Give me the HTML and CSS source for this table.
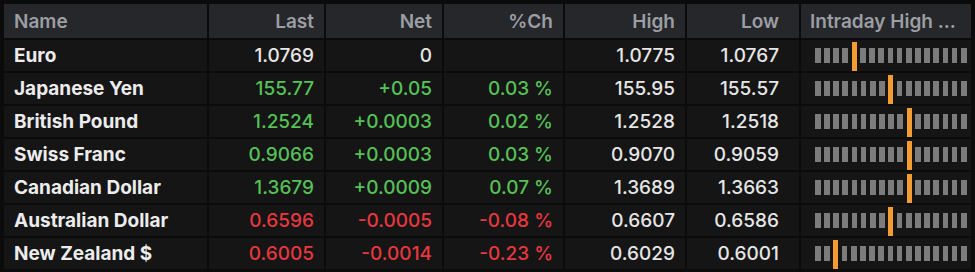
FILE: index.html
```html
<!DOCTYPE html>
<html>
<head>
<meta charset="utf-8">
<link rel="stylesheet" href="styles.css">
</head>
<body>
<div class="wrap">
<table class="fx">
<colgroup>
<col class="c-name"><col class="c-last"><col class="c-net"><col class="c-pct"><col class="c-high"><col class="c-low"><col class="c-bar">
</colgroup>
<thead>
<tr>
<th class="name">Name</th><th class="num">Last</th><th class="num">Net</th><th class="num">%Ch</th><th class="num">High</th><th class="num low">Low</th><th class="intra">Intraday High ...</th>
</tr>
</thead>
<tbody>
<tr>
<td class="name">Euro</td><td class="num">1.0769</td><td class="num">0</td><td class="num"></td><td class="num">1.0775</td><td class="num low">1.0767</td>
<td class="intra"><div class="bars"><i></i><i></i><i></i><i></i><b></b><i></i><i></i><i></i><i></i><i></i><i></i><i></i><i></i><i></i><i></i><i></i><i></i></div></td>
</tr>
<tr>
<td class="name">Japanese Yen</td><td class="num up">155.77</td><td class="num up">+0.05</td><td class="num up">0.03 %</td><td class="num">155.95</td><td class="num low">155.57</td>
<td class="intra"><div class="bars"><i></i><i></i><i></i><i></i><i></i><i></i><i></i><i></i><b></b><i></i><i></i><i></i><i></i><i></i><i></i><i></i><i></i></div></td>
</tr>
<tr>
<td class="name">British Pound</td><td class="num up">1.2524</td><td class="num up">+0.0003</td><td class="num up">0.02 %</td><td class="num">1.2528</td><td class="num low">1.2518</td>
<td class="intra"><div class="bars"><i></i><i></i><i></i><i></i><i></i><i></i><i></i><i></i><i></i><i></i><b></b><i></i><i></i><i></i><i></i><i></i><i></i></div></td>
</tr>
<tr>
<td class="name">Swiss Franc</td><td class="num up">0.9066</td><td class="num up">+0.0003</td><td class="num up">0.03 %</td><td class="num">0.9070</td><td class="num low">0.9059</td>
<td class="intra"><div class="bars"><i></i><i></i><i></i><i></i><i></i><i></i><i></i><i></i><i></i><i></i><b></b><i></i><i></i><i></i><i></i><i></i><i></i></div></td>
</tr>
<tr>
<td class="name">Canadian Dollar</td><td class="num up">1.3679</td><td class="num up">+0.0009</td><td class="num up">0.07 %</td><td class="num">1.3689</td><td class="num low">1.3663</td>
<td class="intra"><div class="bars"><i></i><i></i><i></i><i></i><i></i><i></i><i></i><i></i><i></i><i></i><b></b><i></i><i></i><i></i><i></i><i></i><i></i></div></td>
</tr>
<tr>
<td class="name">Australian Dollar</td><td class="num down">0.6596</td><td class="num down">-0.0005</td><td class="num down">-0.08 %</td><td class="num">0.6607</td><td class="num low">0.6586</td>
<td class="intra"><div class="bars"><i></i><i></i><i></i><i></i><i></i><i></i><i></i><i></i><b></b><i></i><i></i><i></i><i></i><i></i><i></i><i></i><i></i></div></td>
</tr>
<tr>
<td class="name">New Zealand $</td><td class="num down">0.6005</td><td class="num down">-0.0014</td><td class="num down">-0.23 %</td><td class="num">0.6029</td><td class="num low">0.6001</td>
<td class="intra"><div class="bars"><i></i><i></i><b></b><i></i><i></i><i></i><i></i><i></i><i></i><i></i><i></i><i></i><i></i><i></i><i></i><i></i><i></i></div></td>
</tr>
</tbody>
</table>
</div>
</body>
</html>
```
FILE: styles.css
```css
html, body {
  margin: 0;
  padding: 0;
  background: #0b0b0b;
}
body {
  width: 975px;
  height: 272px;
  overflow: hidden;
  font-family: Inter, "Liberation Sans", sans-serif;
}
.wrap {
  background: #0b0b0b;
  padding: 2px 2px 1px 2px;
}
.fx {
  table-layout: fixed;
  border-collapse: separate;
  border-spacing: 2px;
  width: 971px;
}
.c-name { width: 203px; }
.c-last { width: 115px; }
.c-net { width: 116px; }
.c-pct { width: 119px; }
.c-high { width: 120px; }
.c-low { width: 112px; }
.c-bar { width: 170px; }

th, td {
  padding: 0 10px;
  white-space: nowrap;
  overflow: hidden;
  box-sizing: border-box;
}
th {
  height: 34px;
  background: #26272b;
  color: #9b9ea3;
  font-size: 19px;
  font-weight: 600;
  text-align: left;
}
td {
  height: 31px;
  background: #151515;
  color: #e6e6e6;
  font-size: 19px;
  font-weight: 500;
}
.name { text-align: left; }
td.name { font-weight: 700; color: #ececec; }
.num { text-align: right; }
.low { padding-right: 20px; }
.up { color: #56c157; }
.down { color: #e7373f; }
th.intra {
  padding: 0 9px;
  text-overflow: clip;
}
td.intra {
  padding: 0 0 0 14px;
}
.bars {
  display: flex;
  align-items: center;
  gap: 3.5px;
  width: 155px;
  height: 31px;
}
.bars i {
  flex: 0 0 5.67px;
  height: 15px;
  background: #7c7c7c;
}
.bars b {
  flex: 0 0 5px;
  height: 29px;
  margin-top: 2px;
  background: #f39c31;
}
```
